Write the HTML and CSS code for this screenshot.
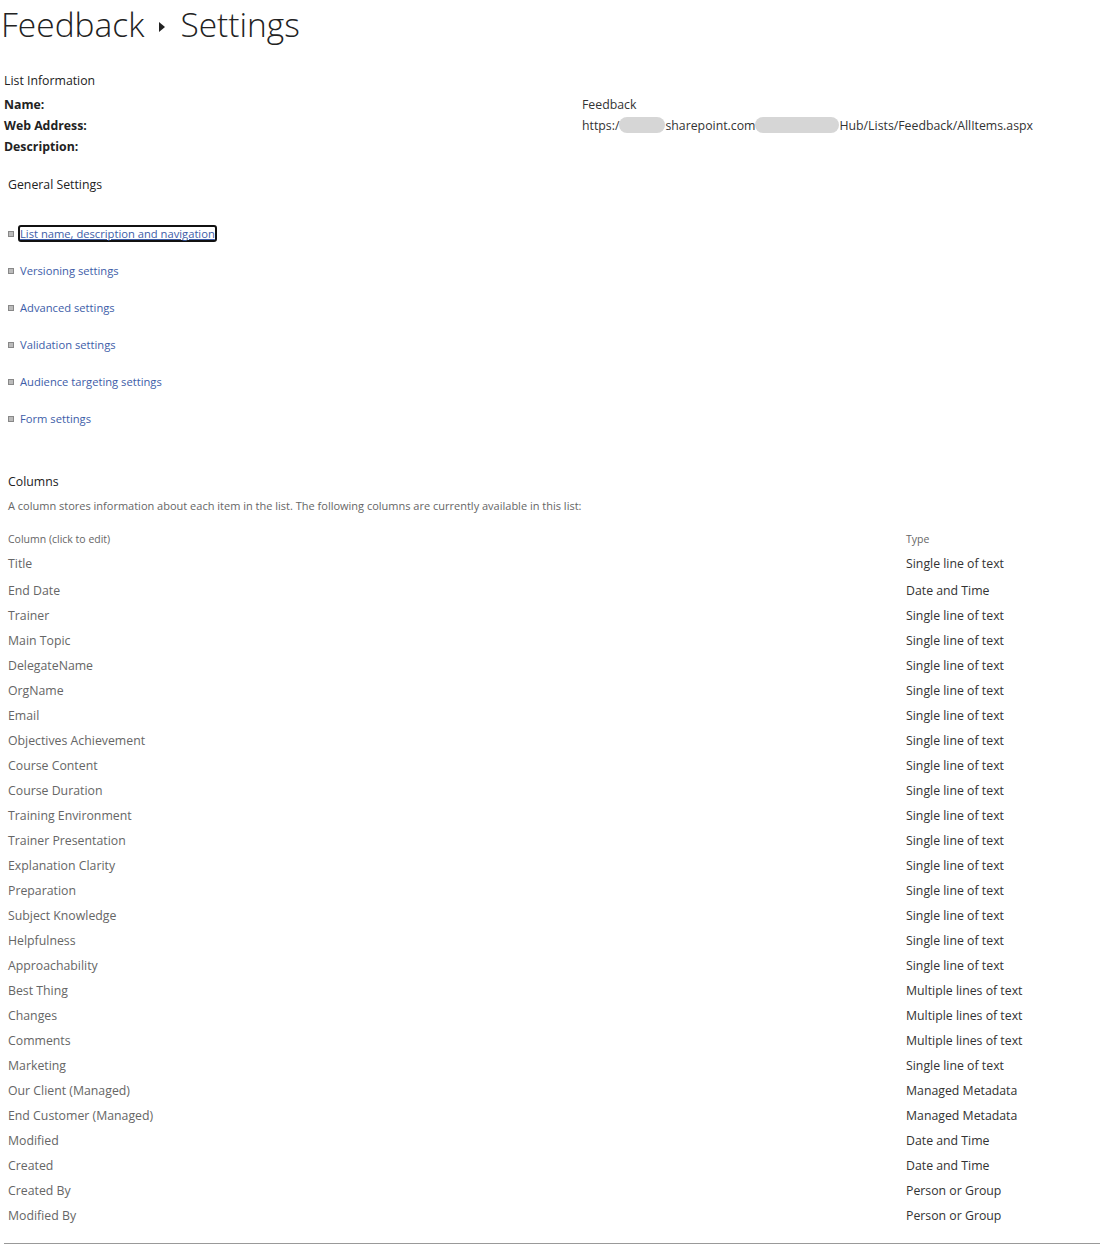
FILE: index.html
```html
<!DOCTYPE html>
<html lang="en">
<head>
<meta charset="UTF-8">
<title>Feedback - Settings</title>
<link rel="stylesheet" href="styles.css">
</head>
<body>
<h1 class="page-title">
    <span>Feedback</span>
    <svg class="crumb-arrow" width="8" height="12" viewBox="0 0 8 12"><path d="M1 1 L7 6 L1 11 Z" fill="#222"/></svg>
    <span>Settings</span>
</h1>

<div class="list-info">
    <div class="section-head">List Information</div>
    <div class="info-row">
        <div class="info-label">Name:</div>
        <div class="info-value">Feedback</div>
    </div>
    <div class="info-row">
        <div class="info-label">Web Address:</div>
        <div class="info-value">https:/<span class="blur b1"></span>sharepoint.com<span class="blur b2"></span>Hub/Lists/Feedback/AllItems.aspx</div>
    </div>
    <div class="info-row">
        <div class="info-label">Description:</div>
        <div class="info-value"></div>
    </div>
</div>

<div class="general">
    <div class="section-head">General Settings</div>
    <ul class="link-list">
        <li><a href="#" class="focused">List name, description and navigation</a></li>
        <li><a href="#">Versioning settings</a></li>
        <li><a href="#">Advanced settings</a></li>
        <li><a href="#">Validation settings</a></li>
        <li><a href="#">Audience targeting settings</a></li>
        <li><a href="#">Form settings</a></li>
    </ul>
</div>

<div class="columns">
    <div class="section-head">Columns</div>
    <div class="columns-desc">A column stores information about each item in the list. The following columns are currently available in this list:</div>
    <table class="col-table">
        <tr class="col-head"><th>Column (click to edit)</th><th>Type</th></tr>
        <tr class="first"><td>Title</td><td>Single line of text</td></tr>
        <tr><td>End Date</td><td>Date and Time</td></tr>
        <tr><td>Trainer</td><td>Single line of text</td></tr>
        <tr><td>Main Topic</td><td>Single line of text</td></tr>
        <tr><td>DelegateName</td><td>Single line of text</td></tr>
        <tr><td>OrgName</td><td>Single line of text</td></tr>
        <tr><td>Email</td><td>Single line of text</td></tr>
        <tr><td>Objectives Achievement</td><td>Single line of text</td></tr>
        <tr><td>Course Content</td><td>Single line of text</td></tr>
        <tr><td>Course Duration</td><td>Single line of text</td></tr>
        <tr><td>Training Environment</td><td>Single line of text</td></tr>
        <tr><td>Trainer Presentation</td><td>Single line of text</td></tr>
        <tr><td>Explanation Clarity</td><td>Single line of text</td></tr>
        <tr><td>Preparation</td><td>Single line of text</td></tr>
        <tr><td>Subject Knowledge</td><td>Single line of text</td></tr>
        <tr><td>Helpfulness</td><td>Single line of text</td></tr>
        <tr><td>Approachability</td><td>Single line of text</td></tr>
        <tr><td>Best Thing</td><td>Multiple lines of text</td></tr>
        <tr><td>Changes</td><td>Multiple lines of text</td></tr>
        <tr><td>Comments</td><td>Multiple lines of text</td></tr>
        <tr><td>Marketing</td><td>Single line of text</td></tr>
        <tr><td>Our Client (Managed)</td><td>Managed Metadata</td></tr>
        <tr><td>End Customer (Managed)</td><td>Managed Metadata</td></tr>
        <tr><td>Modified</td><td>Date and Time</td></tr>
        <tr><td>Created</td><td>Date and Time</td></tr>
        <tr><td>Created By</td><td>Person or Group</td></tr>
        <tr><td>Modified By</td><td>Person or Group</td></tr>
    </table>
</div>

<hr class="bottom-rule">
</body>
</html>
```

FILE: styles.css
```css
body {
    margin: 0;
    font-family: "Open Sans", "Noto Sans", sans-serif;
    font-size: 12.3px;
    color: #333;
    background: #fff;
}
.page-title {
    margin: 0;
    padding: 0 0 0 1px;
    height: 62px;
    font-size: 33.5px;
    font-weight: 300;
    color: #222;
    line-height: 48px;
    display: flex;
    align-items: flex-start;
    gap: 14px;
}
.crumb-arrow {
    margin-top: 21px;
}
.section-head {
    font-size: 12.3px;
    color: #222;
}
.list-info {
    padding: 9px 4px 0 4px;
}
.list-info .section-head {
    line-height: 20px;
    margin-bottom: 3px;
}
.info-row {
    display: flex;
    line-height: 21px;
}
.info-label {
    width: 578px;
    font-weight: bold;
    color: #222;
}
.info-value {
    color: #333;
}
.blur {
    display: inline-block;
    height: 16px;
    background: #d6d6d6;
    border-radius: 8px;
    vertical-align: -3px;
}
.b1 { width: 46px; }
.b2 { width: 84px; }
.general {
    padding: 18px 8px 0 8px;
}
.general .section-head {
    line-height: 20px;
}
.link-list {
    list-style: none;
    margin: 30px 0 0 0;
    padding: 0;
}
.link-list li {
    height: 37px;
    display: flex;
    align-items: flex-start;
    line-height: 18px;
}
.link-list li::before {
    content: "";
    width: 4px;
    height: 4px;
    border: 1px solid #888;
    background: #bbb;
    margin: 6px 6px 0 0;
}
.link-list a {
    color: #3d5da8;
    text-decoration: none;
    font-size: 11.2px;
    border: 2px solid transparent;
    border-radius: 3px;
    margin-left: -2px;
    line-height: 13px;
}
.link-list a.focused {
    border-color: #111;
    text-decoration: underline;
}
.columns {
    padding: 25px 8px 0 8px;
}
.columns .section-head {
    line-height: 20px;
}
.columns-desc {
    font-size: 11px;
    color: #666;
    margin-top: 6px;
}
.col-table {
    border-collapse: collapse;
    width: 100%;
    margin-top: 15px;
}
.col-table th {
    font-weight: normal;
    font-size: 10.5px;
    color: #666;
    text-align: left;
    padding: 0;
    height: 21px;
}
.col-table th:first-child {
    width: 898px;
}
.col-table td {
    padding: 0;
    height: 25px;
    color: #666;
}
.col-table td + td {
    color: #333;
}
.col-table tr.first td {
    height: 29px;
}
.bottom-rule {
    margin: 15px 2px 0 4px;
    border: none;
    border-top: 1px solid #999;
}
```
